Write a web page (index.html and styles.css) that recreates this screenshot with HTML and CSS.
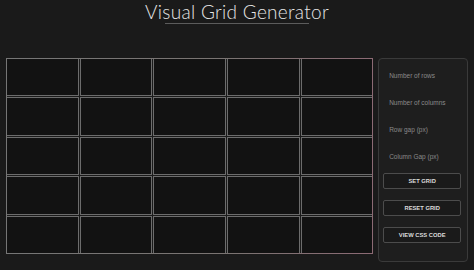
FILE: index.html
```html
<!DOCTYPE html>
<html lang="en">
<head>
<meta charset="utf-8">
<title>Visual Grid Generator</title>
<link rel="stylesheet" href="styles.css">
</head>
<body>
<header class="header">
  <h1 class="title">Visual Grid Generator</h1>
</header>
<main class="main">
  <div class="grid">
    <div class="cell"></div><div class="cell"></div><div class="cell"></div><div class="cell"></div><div class="cell"></div>
    <div class="cell"></div><div class="cell"></div><div class="cell"></div><div class="cell"></div><div class="cell"></div>
    <div class="cell"></div><div class="cell"></div><div class="cell"></div><div class="cell"></div><div class="cell"></div>
    <div class="cell"></div><div class="cell"></div><div class="cell"></div><div class="cell"></div><div class="cell"></div>
    <div class="cell"></div><div class="cell"></div><div class="cell"></div><div class="cell"></div><div class="cell"></div>
  </div>
  <aside class="panel">
    <div class="field">Number of rows</div>
    <div class="field">Number of columns</div>
    <div class="field">Row gap (px)</div>
    <div class="field">Column Gap (px)</div>
    <div class="buttons">
      <button class="btn">SET GRID</button>
      <button class="btn">RESET GRID</button>
      <button class="btn">VIEW CSS CODE</button>
    </div>
  </aside>
</main>
</body>
</html>
```

FILE: styles.css
```css
html, body {
  margin: 0;
  padding: 0;
  background: #1a1a1a;
  height: 100%;
  overflow: hidden;
}

body {
  font-family: "Liberation Sans", Arial, sans-serif;
  color: #ddd;
}

.header {
  height: 58px;
  display: flex;
  justify-content: center;
  align-items: flex-start;
}

.title {
  position: relative;
  margin: 0;
  padding-top: 2px;
  font-family: Lato, "Open Sans", sans-serif;
  font-weight: 300;
  font-size: 19px;
  line-height: 19px;
  letter-spacing: 0.3px;
  color: #e6e6e6;
}

.title::after {
  content: "";
  position: absolute;
  left: 50%;
  top: 23px;
  width: 144px;
  margin-left: -72px;
  border-top: 1px solid #5c5c5c;
}

.main {
  display: flex;
  gap: 5px;
  padding: 0 6px;
  align-items: flex-start;
}

.grid {
  position: relative;
  width: 368px;
  height: 196px;
  display: grid;
  grid-template-columns: repeat(5, 1fr);
  grid-template-rows: repeat(5, 1fr);
  gap: 1px;
}

.grid::after {
  content: "";
  position: absolute;
  inset: 0;
  border: 1px solid;
  border-image: linear-gradient(90deg, #767676, #7a7472 60%, #8c6a74) 1;
  pointer-events: none;
}

.cell {
  background: #121212;
  border: 1px solid #6c6c6c;
}

.panel {
  width: 80px;
  height: 195px;
  padding: 3px 4px 4px;
  background: #1e1e1e;
  border: 1px solid #3a3a3a;
  border-radius: 4px;
  display: flex;
  flex-direction: column;
}

.field {
  height: 27px;
  display: flex;
  align-items: center;
  padding-left: 6px;
  font-size: 6.5px;
  color: #8a8a8a;
  flex-shrink: 0;
}

.buttons {
  display: flex;
  flex-direction: column;
  gap: 11px;
  margin-top: 3px;
}

.btn {
  height: 16px;
  width: 78px;
  padding: 0;
  background: #1a1a1a;
  border: 1px solid #4c4c4c;
  border-radius: 2px;
  color: #dcdcdc;
  font-family: "Liberation Sans", Arial, sans-serif;
  font-weight: bold;
  font-size: 5.8px;
  letter-spacing: 0;
}
```
